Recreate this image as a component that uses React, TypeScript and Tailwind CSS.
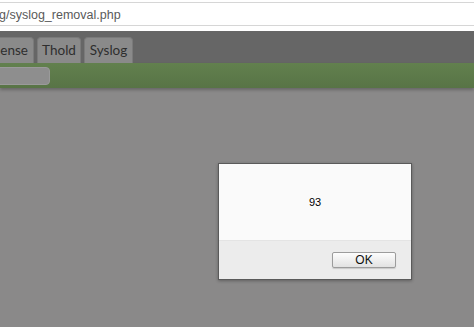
export default function App() {
  return (
    <div className="relative h-[327px] w-[474px] overflow-hidden bg-[#8a8989] font-['Liberation_Sans',sans-serif]">
      <div className="h-[31px] bg-white pt-[2px]">
        <div className="flex h-[24px] items-center overflow-hidden border-y border-[#d6d6d6] bg-white pt-[3px]">
          <span className="ml-[-1px] whitespace-nowrap text-[12.5px] text-[#5a5a5a]">g/syslog_removal.php</span>
        </div>
      </div>

      <div className="flex h-[32px] items-end gap-[3px] bg-[#666666] font-['Lato',sans-serif]">
        <div className="ml-[-8px] flex h-[26px] w-[42px] items-center justify-end rounded-t-[4px] border border-b-0 border-[#7a7a7a] bg-[#8a8a8a] pr-[5px] text-[13.5px] text-[#2e2e2e]">
          ense
        </div>
        <div className="flex h-[26px] w-[44px] items-center justify-center rounded-t-[4px] border border-b-0 border-[#7a7a7a] bg-[#8a8a8a] text-[13.5px] text-[#2e2e2e]">
          Thold
        </div>
        <div className="flex h-[26px] w-[49px] items-center justify-center rounded-t-[4px] border border-b-0 border-[#7a7a7a] bg-[#8a8a8a] text-[13.5px] text-[#2e2e2e]">
          Syslog
        </div>
      </div>

      <div className="flex h-[25px] items-center bg-gradient-to-b from-[#62804e] to-[#587446] shadow-[0_2px_3px_rgba(0,0,0,0.25)]">
        <div className="ml-[-10px] h-[18px] w-[60px] rounded-[4px] border border-[#9a9a9a] bg-[#8e8e8e]" />
      </div>

      <div className="absolute left-[218px] top-[163px] flex h-[117px] w-[194px] flex-col border border-[#5a5a5a] bg-[#fafafa] shadow-[0_1px_3px_rgba(0,0,0,0.3)]">
        <div className="flex h-[76px] items-center justify-center pt-[1px] text-[11px] text-black">93</div>
        <div className="flex flex-1 items-center justify-end border-t border-[#e4e4e4] bg-[#ececec] pr-[15px]">
          <button className="h-[16px] w-[64px] rounded-[2px] border border-[#9c9c9c] bg-gradient-to-b from-[#fdfdfd] to-[#e2e2e2] text-[12px] leading-[14px] text-[#111] shadow-[0_1px_1px_rgba(0,0,0,0.15)]">
            OK
          </button>
        </div>
      </div>
    </div>
  );
}
